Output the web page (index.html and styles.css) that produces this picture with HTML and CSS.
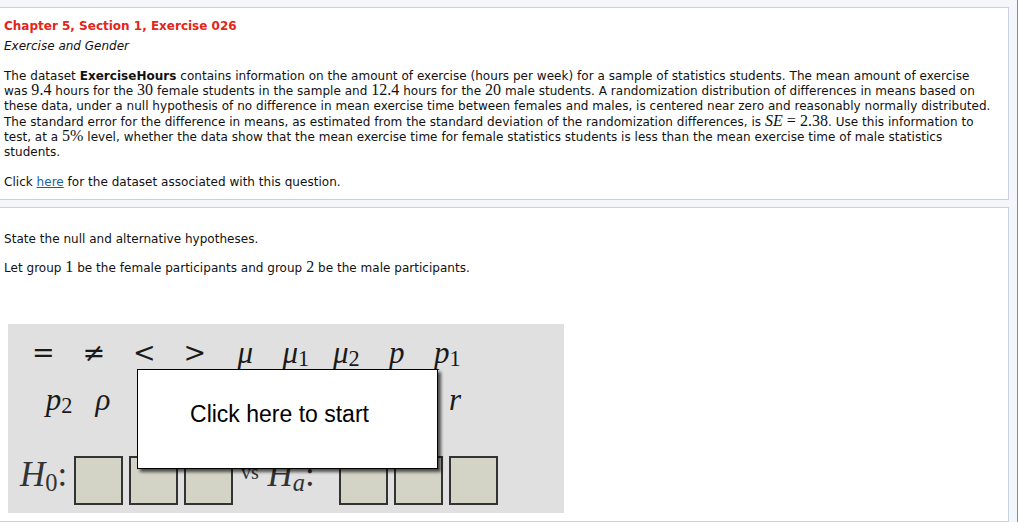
FILE: index.html
```html
<!DOCTYPE html>
<html lang="en">
<head>
    <meta charset="UTF-8">
    <meta name="viewport" content="width=device-width, initial-scale=1.0">
    <title>Chapter 5, Section 1, Exercise 026</title>
    <link rel="stylesheet" href="styles.css">
</head>
<body>
    <div class="page">
        <div class="panel intro">
            <h2 class="chapter">Chapter 5, Section 1, Exercise 026</h2>
            <p class="subtitle">Exercise and Gender</p>
            <p class="text">The dataset <b>ExerciseHours</b> contains information on the amount of exercise (hours per week) for a sample of statistics students. The mean amount of exercise<br>
                was <span class="m">9.4</span> hours for the <span class="m">30</span> female students in the sample and <span class="m">12.4</span> hours for the <span class="m">20</span> male students. A randomization distribution of differences in means based on<br>
                these data, under a null hypothesis of no difference in mean exercise time between females and males, is centered near zero and reasonably normally distributed.<br>
                The standard error for the difference in means, as estimated from the standard deviation of the randomization differences, is <span class="m"><i>SE</i> = 2.38</span>. Use this information to<br>
                test, at a <span class="m">5%</span> level, whether the data show that the mean exercise time for female statistics students is less than the mean exercise time of male statistics<br>
                students.</p>
            <p class="text">Click <a href="#">here</a> for the dataset associated with this question.</p>
        </div>

        <div class="panel question">
            <p class="text">State the null and alternative hypotheses.</p>
            <p class="text">Let group <span class="m">1</span> be the female participants and group <span class="m">2</span> be the male participants.</p>

            <div class="palette">
                <div class="sym-row first">
                    <span class="sym op">=</span>
                    <span class="sym op">&ne;</span>
                    <span class="sym op">&lt;</span>
                    <span class="sym op">&gt;</span>
                    <span class="sym"><i>&mu;</i></span>
                    <span class="sym"><i>&mu;</i><sub>1</sub></span>
                    <span class="sym"><i>&mu;</i><sub>2</sub></span>
                    <span class="sym"><i>p</i></span>
                    <span class="sym"><i>p</i><sub>1</sub></span>
                </div>
                <div class="sym-row second">
                    <span class="sym"><i>p</i><sub>2</sub></span>
                    <span class="sym"><i>&rho;</i></span>
                    <!-- the rest of this row sits under the start box -->
                    <span class="sym"></span>
                    <span class="sym"></span>
                    <span class="sym"></span>
                    <span class="sym"></span>
                    <span class="sym"></span>
                    <span class="sym"></span>
                    <span class="sym"></span>
                    <span class="sym"><i>r</i></span>
                </div>
                <div class="answer-row">
                    <span class="hyp h0"><i>H</i><sub>0</sub>:</span>
                    <span class="slot"></span>
                    <span class="slot"></span>
                    <span class="slot"></span>
                    <span class="hyp ha"><span class="vs">vs</span> <i>H</i><sub class="a">a</sub>:</span>
                    <span class="slot"></span>
                    <span class="slot"></span>
                    <span class="slot"></span>
                </div>

                <div class="start-overlay">Click here to start</div>
            </div>
        </div>
    </div>
</body>
</html>
```

FILE: styles.css
```css
body {
    margin: 0;
    background-color: #fff;
    font-family: 'DejaVu Sans', Verdana, sans-serif;
    font-size: 12px;
    color: #111;
}
.page {
    width: 1009px;
    padding: 7px 8px 0 0;
    background-color: #f3f7fb;
    border-right: 1px solid #8c8c8c;
}
.panel {
    background-color: #fff;
    border: 1px solid #c9d1e2;
    border-left: none;
    padding: 0 4px;
}
.intro {
    padding-top: 10px;
    padding-bottom: 9px;
    margin-bottom: 7px;
}
.question {
    padding-top: 24px;
    padding-bottom: 8px;
}
.chapter {
    color: #e2261a;
    font-size: 12px;
    line-height: 16px;
    margin: 0;
}
.subtitle {
    font-style: italic;
    line-height: 16px;
    margin: 4px 0 0;
}
.text {
    line-height: 15.2px;
    letter-spacing: 0.03px;
    margin: 13px 0 0;
}
.intro .text {
    margin-top: 15px;
}
.question .text:first-child {
    margin-top: 0;
}
.text a {
    color: #1c5d9e;
}
.m {
    font-family: 'Liberation Serif', 'Times New Roman', serif;
    font-size: 16px;
    line-height: 0;
}

/* answer palette */
.palette {
    position: relative;
    width: 556px;
    height: 189px;
    margin: 48px 0 0 4px;
    padding-top: 9px;
    box-sizing: border-box;
    background-color: #e0e0e0;
    font-family: 'Liberation Serif', 'Times New Roman', serif;
    color: #1a1a1a;
}
.sym-row {
    display: flex;
    height: 40px;
    line-height: 40px;
    font-size: 31px;
}
.sym-row.first {
    padding-left: 10px;
}
.sym-row.first .sym {
    width: 50.5px;
    text-align: center;
}
.sym.op {
    font-family: 'DejaVu Serif', serif;
    font-size: 27px;
    font-weight: 300;
}
.sym-row.second {
    margin-top: 7px;
    padding-left: 29px;
}
.sym-row.second .sym {
    width: 44px;
    text-align: center;
}
.sym sub {
    font-size: 0.72em;
    vertical-align: -0.12em;
    font-style: normal;
}
.answer-row {
    display: flex;
    align-items: flex-end;
    margin-top: 34px;
    padding-left: 12px;
    font-size: 35px;
    color: #333;
}
.hyp {
    line-height: 36px;
    padding-bottom: 4px;
    white-space: nowrap;
}
.hyp sub {
    font-size: 0.7em;
    vertical-align: -0.2em;
    font-style: normal;
}
.hyp sub.a {
    font-style: italic;
}
.h0 {
    width: 54px;
}
.ha {
    width: 92px;
    padding-left: 2px;
    margin-right: 6px;
}
.vs {
    font-size: 20px;
    vertical-align: 0.35em;
}
.slot {
    width: 45px;
    height: 45px;
    margin-right: 6px;
    background-color: #d3d3c6;
    border: 2px solid #333;
}
.start-overlay {
    position: absolute;
    left: 129px;
    top: 45px;
    width: 301px;
    height: 100px;
    display: flex;
    align-items: center;
    justify-content: center;
    padding-right: 16px;
    padding-bottom: 8px;
    box-sizing: border-box;
    background-color: #fff;
    border: 1px solid #000;
    box-shadow: 3px 3px 3px rgba(0, 0, 0, 0.65);
    font-family: 'Liberation Sans', Arial, sans-serif;
    font-size: 23px;
    color: #000;
}
```
